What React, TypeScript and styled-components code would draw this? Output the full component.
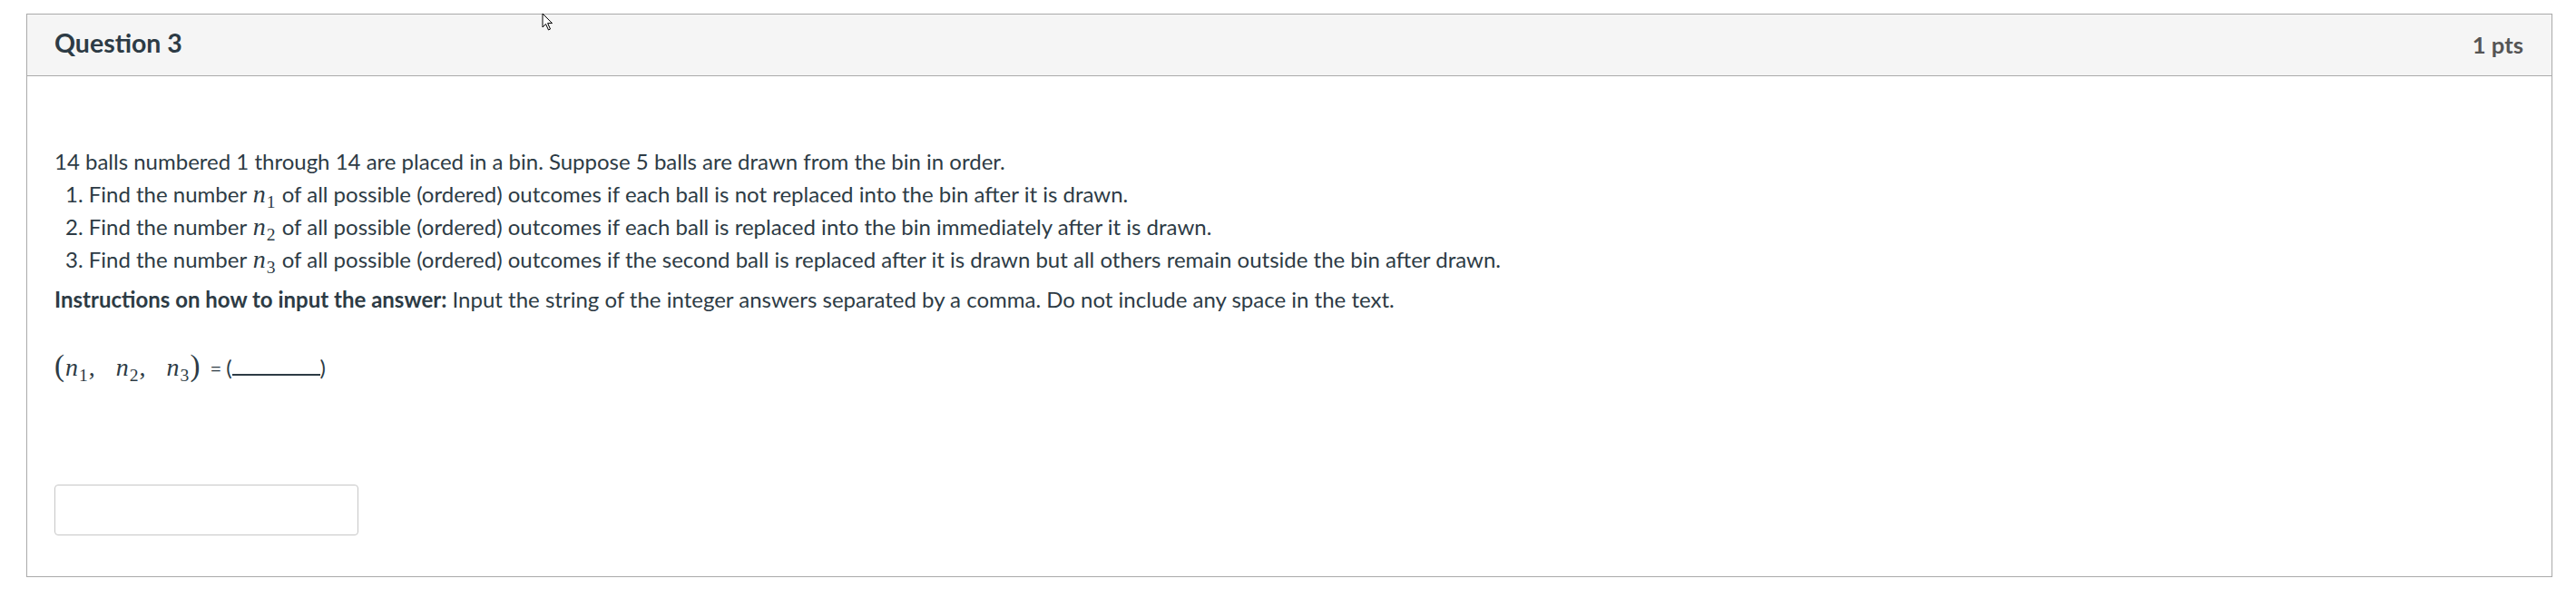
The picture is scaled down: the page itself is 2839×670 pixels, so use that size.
import React from "react";
import styled, { createGlobalStyle } from "styled-components";

const GlobalStyle = createGlobalStyle`
  html, body { margin: 0; padding: 0; background: #fff; }
  body { font-family: Lato, "Noto Sans", sans-serif; color: #2d3b45; }
`;

const Page = styled.div`
  position: relative;
  padding: 15px 26px 0 29px;
`;

const Card = styled.section`
  border: 1px solid #aaa;
  background: #fff;
`;

const Header = styled.header`
  display: flex;
  align-items: center;
  justify-content: space-between;
  box-sizing: border-box;
  height: 68px;
  padding: 0 31px 5px 30px;
  background: #f5f5f5;
  border-bottom: 1px solid #aaa;
`;

const Title = styled.h2`
  margin: 0;
  font-size: 28.5px;
  font-weight: 700;
  color: #2d3b45;
`;

const Points = styled.div`
  font-size: 25.6px;
  font-weight: 700;
  color: #555;
  padding-top: 3px;
`;

const Body = styled.div`
  padding: 76px 30px 45px 30px;
  font-size: 24px;
  line-height: 36px;
  color: #2d3b45;
`;

const Para = styled.p<{ $top?: number }>`
  margin: ${(p) => p.$top ?? 0}px 0 0 0;
`;

const List = styled.ol`
  list-style: none;
  margin: 0;
  padding: 0 0 0 12px;
`;

const Item = styled.li``;

const Strong = styled.strong`
  font-weight: 700;
`;

const MathI = styled.span`
  font-family: "Liberation Serif", "DejaVu Serif", serif;
  font-style: italic;
  font-size: 28px;
  line-height: 1;
  margin: 0 1px;
`;

const Sub = styled.sub`
  font-style: normal;
  font-size: 70%;
  vertical-align: -0.3em;
  line-height: 0;
  margin-left: 1px;
`;

const Paren = styled.span`
  font-family: "Liberation Serif", "DejaVu Serif", serif;
  font-size: 33px;
  font-style: normal;
  line-height: 1;
`;

const MathComma = styled.span`
  font-family: "Liberation Serif", "DejaVu Serif", serif;
  font-style: normal;
  font-size: 28px;
  line-height: 1;
  margin-right: 22px;
`;

const Eq = styled.span`
  font-size: 22px;
  margin: 0 5px 0 11px;
`;

const Blank = styled.span`
  display: inline-block;
  width: 97px;
  height: 20px;
  border-bottom: 2px solid #2d3b45;
  vertical-align: baseline;
`;

const AnswerInput = styled.input`
  display: block;
  box-sizing: border-box;
  margin-top: 110px;
  width: 335px;
  height: 56px;
  border: 1px solid #c7c7c7;
  border-radius: 4px;
  background: #fff;
  outline: none;
`;

const Cursor = styled.svg`
  position: absolute;
  left: 597px;
  top: 14px;
`;

const N = ({ i }: { i: number }) => (
  <MathI>
    n<Sub>{i}</Sub>
  </MathI>
);

export default function App() {
  return (
    <Page>
      <GlobalStyle />
      <Card>
        <Header>
          <Title>Question 3</Title>
          <Points>1 pts</Points>
        </Header>
        <Body>
          <Para>
            14 balls numbered 1 through 14 are placed in a bin. Suppose 5 balls are drawn from the bin in order.
          </Para>
          <List>
            <Item>
              1. Find the number <N i={1} /> of all possible (ordered) outcomes if each ball is not replaced into the bin after it is drawn.
            </Item>
            <Item>
              2. Find the number <N i={2} /> of all possible (ordered) outcomes if each ball is replaced into the bin immediately after it is drawn.
            </Item>
            <Item>
              3. Find the number <N i={3} /> of all possible (ordered) outcomes if the second ball is replaced after it is drawn but all others remain outside the bin after drawn.
            </Item>
          </List>
          <Para $top={8}>
            <Strong>Instructions on how to input the answer:</Strong> Input the string of the integer answers separated by a comma. Do not include any space in the text.
          </Para>
          <Para $top={39}>
            <Paren>(</Paren>
            <N i={1} />
            <MathComma>,</MathComma>
            <N i={2} />
            <MathComma>,</MathComma>
            <N i={3} />
            <Paren>)</Paren>
            <Eq>=</Eq>(<Blank />)
          </Para>
          <AnswerInput type="text" aria-label="answer" />
        </Body>
      </Card>
      <Cursor width="14" height="21" viewBox="0 0 14 21">
        <path d="M1 1 L1 16 L4.5 12.5 L7.5 19 L9.5 18 L6.6 11.6 L11.5 11.6 Z" fill="#fff" stroke="#000" strokeWidth="1" strokeLinejoin="round" />
      </Cursor>
    </Page>
  );
}
